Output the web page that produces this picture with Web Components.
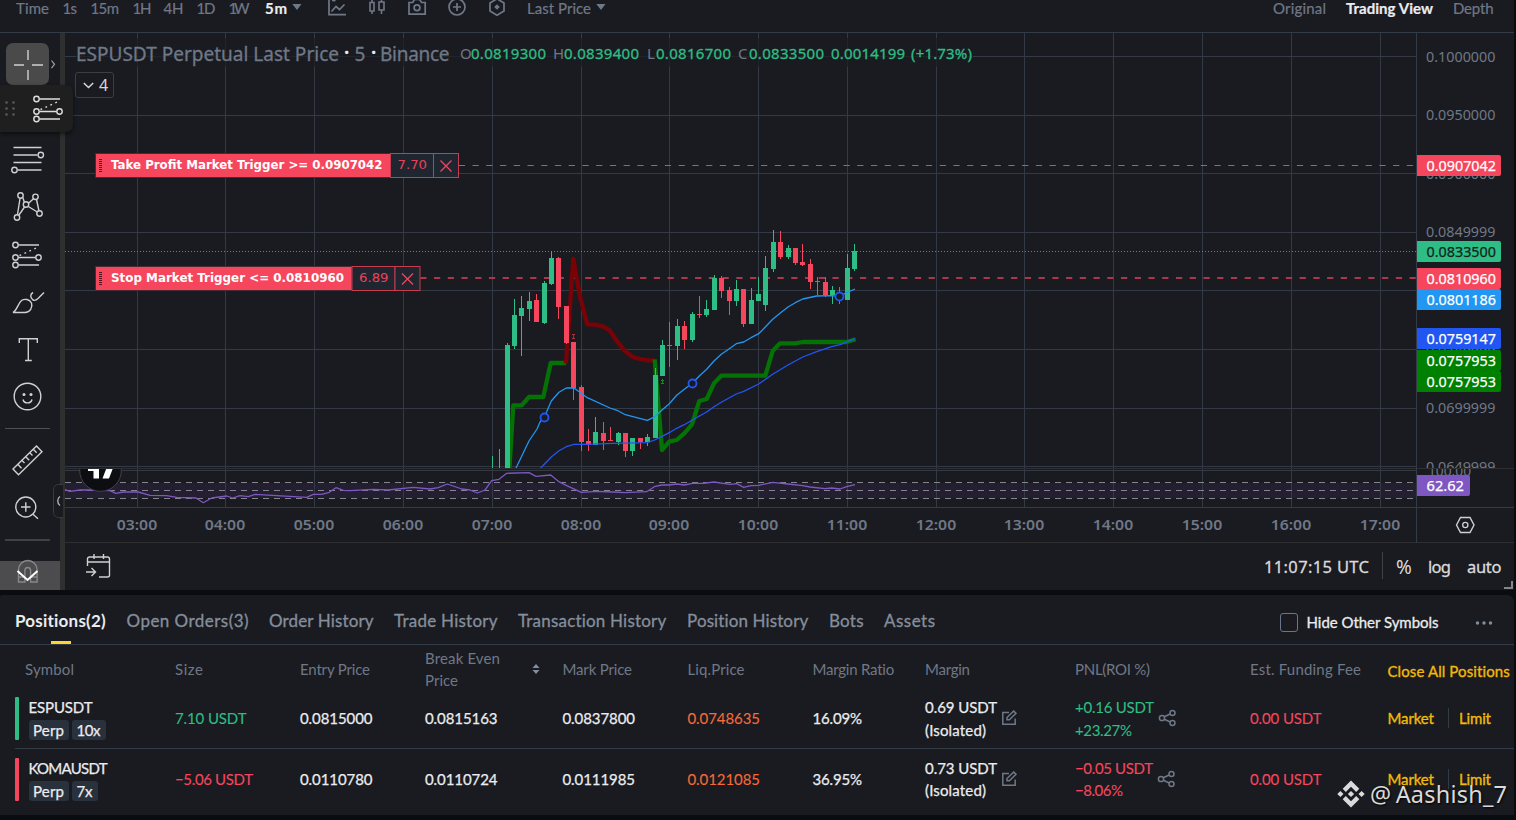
<!DOCTYPE html>
<html lang="en">
<head>
<meta charset="utf-8">
<title>ESPUSDT Perpetual</title>
<style>
html,body{margin:0;height:100%;background:#0a0d10;overflow:hidden}
body{font-family:Lato,"Open Sans",sans-serif;color:#eaecef}
</style>
</head>
<body>
<trading-screen></trading-screen>
<script>
const define = (name, css, render) => customElements.define(name, class extends HTMLElement {
  connectedCallback() {
    if (this.shadowRoot) return;
    this.attachShadow({ mode: 'open' }).innerHTML = `<style>${css}</style>${render(this)}`;
  }
});

/* Single-line text tracked to occupy a given width */
customElements.define('fit-text', class extends HTMLElement {
  connectedCallback() {
    if (this.shadowRoot) return;
    const w = +this.getAttribute('w');
    this.attachShadow({ mode: 'open' }).innerHTML =
      `<style>:host{display:inline-block;white-space:nowrap;flex:none;width:${w}px}span{display:inline-block}</style><span><slot></slot></span>`;
    const s = this.shadowRoot.querySelector('span');
    const nat = s.getBoundingClientRect().width;
    const n = this.textContent.length;
    if (nat && n > 1) s.style.letterSpacing = ((w - nat) / (n - 1)).toFixed(3) + 'px';
  }
});

/* Lays [x, width, html, class] items in a flex run, spacing them by margins */
const run = (start, items) => {
  let end = start;
  return items.map(([x, w, html, cls = '']) => {
    const m = x - end; end = x + w;
    return html[0] === '<'
      ? `<span class="g ${cls}" style="margin-left:${m}px;width:${w}px">${html}</span>`
      : `<fit-text class="${cls}" w="${w}" style="margin-left:${m}px">${html.replace(/</g, '&lt;')}</fit-text>`;
  }).join('');
};
const svg = (w, h, body, extra = '') => `<svg width="${w}" height="${h}" viewBox="0 0 ${w} ${h}" fill="none" stroke="currentColor" stroke-width="1.5" ${extra}>${body}</svg>`;

define('chart-toolbar', `
:host{display:flex;border-bottom:1px solid #333b47;color:#6f7887;font-size:15px;line-height:20px;box-sizing:border-box;height:33px;align-items:flex-start;-webkit-text-stroke:.2px}
fit-text{margin-top:-2px}
.on{color:#eaecef;font-weight:700}
.g{display:block;flex:none;height:20px;margin-top:-2px}
svg{display:block}`, () => run(0, [
  [16,33,'Time'],[62.500,14.500,'1s'],[90.500,28.500,'15m'],[132.500,19,'1H'],[163.500,20,'4H'],[196.500,19,'1D'],[228.500,21,'1W'],[265,22,'5m','on'],
  [292,10,`<svg width="10" height="20"><path d="M.3 6h9.2L5 12z" fill="#6f7887"/></svg>`],
  [327,20,`<svg width="20" height="20" fill="none" stroke="#6f7887" stroke-width="1.7"><path d="M2 0v16.700h17M4.500 13.500l4.500-5 3.500 3 5-5"/><path d="M6.800 0v3.500M5 2.500h3.600" stroke-width="1.4"/></svg>`],
  [368,18,`<svg width="18" height="20" fill="none" stroke="#6f7887" stroke-width="1.6"><path d="M2 4.500h4v8.500H2zM11 4h5v8h-5zM4 1v3.500M4 13v3M13.500 1v3M13.500 12v4"/></svg>`],
  [407,21,`<svg width="21" height="20" fill="none" stroke="#6f7887" stroke-width="1.700"><path d="M2 4.500h3.600l2-3h5l2 3h3.600v11.700H2z"/><circle cx="10" cy="9.700" r="2.900"/></svg>`],
  [447,20,`<svg width="20" height="20" fill="none" stroke="#6f7887" stroke-width="1.700"><circle cx="10" cy="9" r="8"/><path d="M6 9h8M10 5v8"/></svg>`],
  [488,18,`<svg width="18" height="20" fill="none" stroke="#6f7887" stroke-width="1.700"><path d="M9 .8l7 4.100v8.200l-7 4.100-7-4.100V4.900z"/><path d="M9 6.200l2.800 2.800L9 11.800 6.200 9z" fill="#6f7887" stroke="none"/></svg>`],
  [527,64,'Last Price'],
  [596,10,`<svg width="10" height="20"><path d="M.3 6h9.2L5 12z" fill="#6f7887"/></svg>`],
  [1273,53,'Original'],[1346,87,'Trading View','on'],[1453,40.500,'Depth']
]));

/* Drawing tools: each entry is [top, height, artwork in rail coordinates] */
const ring = (x, y, r = 2.7) => `<circle cx="${x}" cy="${y}" r="${r}"/>`;
const projection = (x, y, w) => `<path d="M${x+6} ${y}h${w-7}M${x+6} ${y+12.500}h${w-10.500}M${x+6} ${y+20}h${w-7}"/><path d="M${x+7} ${y+10.500}L${x+w-1} ${y+1.800}" stroke-dasharray="1.800 3.600"/>${ring(x+3,y)}${ring(x+3,y+12.500)}${ring(x+w-1.500,y+12.500)}${ring(x+3,y+20)}`;
const tools = [
  [33,58,`<rect x="6" y="43" width="43" height="42" rx="7" fill="#4a4a4a" stroke="none"/><path d="M14 65h10M32 65h11M28 50v10M28 70v10"/><path d="M51.500 60.500l3 3.800-3 3.800" stroke="#a0a0a0" stroke-width="1.200"/>`],
  [131,52,`<path d="M13.500 147.500h28M13.500 155h24M13.500 162.500h28M18 170h23.500"/>${ring(40.800,155)}${ring(14.500,170)}`],
  [183,48,`<path d="M17.500 214.500l2.500-16M22.800 197.500l1.500 4.500M28.500 203.300l5-4.500M36.500 199.500l2.500 11.500M19 215l5.500-8M28.300 206.500l9 5.500"/>${ring(20.500,195.500)}${ring(35.500,196.800)}${ring(26,204.500)}${ring(17,217.500)}${ring(39.500,213.500)}`],
  [231,48, projection(12.500,245,27.500)],
  [279,48,`<path d="M13 312.500c4-2 5-9 8.500-12 3-2 8-1.500 10 2.500 1.500 4.500-1.500 9.500-6.500 9.500zM33 292.500c-3 1.500-3 5 0 7.500 2 1 4-.5 5-1.500l6-6"/>`],
  [327,47,`<path d="M19.300 343v-4.200h18v4.200M28.300 339v21.500M25 360.500h6.800"/>`],
  [374,46,`<circle cx="27.500" cy="396.500" r="13.300"/><path d="M23 399.500c1 4.500 8 4.500 9 0"/><circle cx="24" cy="394.500" r="1.500" fill="#d4d4d4" stroke="none"/><circle cx="31" cy="394.500" r="1.500" fill="#d4d4d4" stroke="none"/>`],
  [420,17,`<path d="M5 428.500h45" stroke="#4f4f52" stroke-width="1"/>`],
  [437,46,`<path d="M13 469L36.500 446l5.500 5.700L18.500 474.800zM18 464.500l3.500 3.700M22 460.500l2.500 2.500M26 457l3.200 3.200M30 453l2.500 2.500M33.500 449.500l3.200 3.200"/>`],
  [483,50,`<circle cx="25.800" cy="507" r="10"/><path d="M21 507h9.500M25.800 502.200v9.500M33 514.300l5 4.500"/>`],
  [533,12,`<path d="M5 540h45" stroke="#4f4f52" stroke-width="1.700"/>`],
  [545,45,`<path d="M0 561h60v29H0z" fill="#4c4c4e" stroke="none"/><path d="M18.500 582v-12a9.300 9.500 0 0 1 18.600 0v12h-6.500v-12a2.900 3 0 0 0-5.700 0v12zM18.500 577h6.400M30.600 577h6.500" stroke="#88888c"/><path d="M17.500 571l10 9 10-9" stroke="#fff" stroke-width="2"/>`]
];
define('tool-rail', `
:host{display:flex;flex-direction:column;width:60px;border-right:5px solid #2f2f2f;flex:none;position:relative;color:#d0d0d0}
svg{display:block;flex:none}
.fly{position:absolute;left:0;top:52px;width:73px;height:47px;background:#1f1f1f;border-radius:0 7px 7px 0;box-shadow:0 2px 4px #0008;z-index:3}
.grip{position:absolute;left:53px;top:451px;z-index:3}`, () =>
  tools.map(([t, h, art], i) => `<svg width="60" height="${i ? h : 98}" viewBox="0 ${t} 60 ${i ? h : 98}" fill="none" stroke="currentColor" stroke-width="1.400">${art}</svg>`).join('') +
  `<div class="fly"><svg width="73" height="47" viewBox="0 85 73 47" fill="none" stroke="#dedede" stroke-width="1.400"><g fill="#5a5a5a" stroke="none">${[102.500,108.500,114.500].map(y => `<circle cx="6.500" cy="${y}" r="1.300"/><circle cx="13.500" cy="${y}" r="1.300"/>`).join('')}</g>${projection(33.500,99,27.500)}</svg></div>
  <svg class="grip" width="11" height="34" fill="#1a1b20" stroke="#3a3a3c"><path d="M10 .5H5.500a5 5 0 0 0-5 5v23a5 5 0 0 0 5 5H10"/><path d="M7 12.500c-3 2-3 7 0 9" stroke="#b0b0b0" stroke-width="1.400"/></svg>`);

/* x, up?, body top, body bottom, high, low */
const candles = [[490,1,468,468,456,468],[497,1,468,468,449,468],[505,1,345,468,343,468],[512,1,315,346,299,349],[519,1,308,316,296,356],[527,1,301,309,292,321],[534,0,300,322,294,322],[542,1,283,323,281,324],[549,1,258,284,251,285],[556,0,258,307,257,319],[564,0,306,343,306,344],[571,0,342,388,342,400],[579,0,387,442,385,451],[586,0,441,445,429,451],[593,1,432,445,417,445],[601,0,433,441,422,450],[608,0,440,441,427,441],[616,1,433,442,432,445],[623,0,433,451,433,457],[630,1,438,451,438,456],[638,0,438,442,438,449],[645,1,437,442,434,446],[653,1,375,438,368,438],[660,1,345,376,340,376],[667,0,345,346,322,367],[675,1,326,346,319,360],[682,0,326,340,321,349],[690,1,314,340,312,342],[697,0,314,315,296,318],[704,1,309,315,300,317],[712,1,278,310,275,310],[719,0,278,291,276,298],[727,0,290,301,287,315],[734,1,289,301,280,306],[741,0,289,324,289,327],[749,1,300,324,288,324],[756,1,294,301,277,301],[763,1,268,305,256,311],[771,1,242,269,230,272],[778,0,242,257,231,259],[786,1,248,257,245,259],[793,0,248,263,248,265],[800,0,262,265,244,266],[808,0,264,282,259,289],[815,0,281,282,277,295],[823,0,282,295,277,297],[830,1,290,295,286,304],[837,0,293,298,287,304],[845,1,268,300,254,300],[852,1,251,269,244,271]];
const pts = (ox, oy, list) => list.map(([x, y]) => `${(ox + x / 3).toFixed(1)},${(oy + y / 3).toFixed(1)}`).join(' ');
const A = l => pts(480, 220, l), B = l => pts(640, 220, l), C = l => pts(60, 250, l);
const line = (p, c, w) => `<polyline points="${p}" fill="none" stroke="${c}" stroke-width="${w}" stroke-linejoin="round"/>`;
const txt = (x, y, w, t, extra = '') => `<text x="${x}" y="${y}" textLength="${w}" lengthAdjust="spacingAndGlyphs" ${extra}>${t}</text>`;
const vx = [137,225,314,403,492,581,669,758,847,936,1024,1113,1202,1291,1380];
const tag = (y, t, fill, color = '#fff', w = 84) => `<path d="M1417 ${y}h${w-2}a2 2 0 0 1 2 2v17a2 2 0 0 1-2 2h-${w-2}z" fill="${fill}"/>${txt(1426.500, y+15.800, w===84?69.500:37.500, t, `fill="${color}" stroke="${color}" stroke-width=".25"`)}`;
const order = (x, y, h, w, t, tw, q, ty) => {
  const e = x + w;
  return `<rect x="${x-1}" y="${y-1}" width="${w+2}" height="${h+2}" fill="#4a2a33"/><rect x="${x}" y="${y}" width="${w}" height="${h}" fill="#f6465d"/>
  <path d="M${x+4.500} ${y+5}v14" stroke="#3d1a24" stroke-width="3" stroke-dasharray="1 1" shape-rendering="crispEdges"/>
  ${txt(x+15, ty, tw, t, 'class="v" font-weight="700" fill="#fff"')}
  <rect x="${e+.5}" y="${y-.5}" width="43" height="${h+1}" fill="#202630" stroke="#c63c50"/>
  <rect x="${e+43.500}" y="${y-.5}" width="25" height="${h+1}" fill="#202630" stroke="#c63c50"/>
  ${txt(e+7.500, ty, 29.500, q, 'class="v" fill="#e8435a"')}
  <path d="M${e+50.500} ${y+6.500}l11 11M${e+61.500} ${y+6.500}l-11 11" stroke="#f6465d" stroke-width="1.200"/>`;
};
define('price-chart', `
:host{display:block;height:510px}
svg{display:block}
text{font-family:"Noto Sans",sans-serif;font-size:15px}
.v{font-family:"DejaVu Sans",sans-serif;font-size:12px}`, () => `
<svg width="1449" height="510" viewBox="65 33 1449 510">
<defs><clipPath id="m"><path d="M65 33h1351v435H65z"/></clipPath><clipPath id="a"><path d="M1417 33h97v435h-97z"/></clipPath><clipPath id="r"><path d="M65 469h1449v38H65z"/></clipPath></defs>
<g shape-rendering="crispEdges">
<path d="M65 483h1351v15H65z" fill="#231f31"/>
<path d="${vx.map(x => `M${x+.5} 33v474`).join('')}${[56,115,173,232,290,349,408,466,470].map(y => `M65 ${y+.5}h1351`).join('')}" stroke="#333a46"/>
<path d="M65 468.500h1449M65 542.500h1449" stroke="#2f2f31"/>
<path d="M65 507.500h1449M1416.500 33v510" stroke="#333b47"/>
<path d="M65 482.500h1351M65 490.500h1351M65 498.500h1351" stroke="#85858e" stroke-dasharray="6 5"/>
</g>
${line(C([[15,719],[30,724],[60,720],[110,720],[150,722],[167,730],[190,726],[235,726],[270,736],[320,737],[350,742],[408,744],[430,758],[455,744],[500,738],[518,744],[540,737],[565,740],[585,733],[650,737],[740,742],[760,733],[785,733],[808,727],[828,713],[850,721],[870,722],[940,718],[985,720],[1060,712],[1110,717],[1135,713],[1162,702],[1205,717],[1230,720],[1252,729],[1275,720]])+' '+A([[35,782],[57,778],[80,760],[147,758],[168,769],[212,765],[235,784],[260,797],[304,817],[350,814],[400,816],[435,818],[500,815],[523,800],[545,795]])+' '+B([[88,795],[110,792],[133,795],[157,790],[190,790],[222,786],[270,793],[290,791],[311,802],[333,797],[356,796],[398,787],[444,792],[488,797],[510,801],[555,806],[575,804],[600,807],[620,800],[645,794]]),'#7e57c2',1.3)}
<g clip-path="url(#r)"><circle cx="100.500" cy="470.500" r="20.800" fill="#0c0e12" stroke="#434348"/><path d="M88 468h11v10.500h-5.500V471H88zM106.500 468h6.500l-4 10.500h-6.500z" fill="#fff"/></g>
<g clip-path="url(#m)">
<path d="M65 251.500h1351" stroke="#2ebd85" stroke-dasharray="1 2" shape-rendering="crispEdges" opacity=".85"/>
<path d="M472.500 165.500H1416M459 165.500h6" stroke="#e8435a" stroke-width="1.200" stroke-dasharray="6.240 7.500"/>
<path d="M434 278H1416M420.500 278h6" stroke="#ab3849" stroke-width="2" stroke-dasharray="6.240 7.500"/>
${line(A([[88,752],[100,556],[125,556],[147,531],[190,531],[212,429],[258,429]]),'#047204',4.3)}
${line(A([[258,430],[280,116],[300,230],[322,313],[345,314],[370,320],[390,332],[412,365],[434,392],[458,411],[480,417],[502,421],[524,421]]),'#780306',4.3)}
${line(B([[44,418],[66,690],[88,665],[110,660],[133,640],[156,613],[178,543],[200,537],[222,490],[244,467],[376,467],[398,393],[420,370],[466,370],[488,366],[620,366],[647,358]]),'#047204',4.3)}
<g shape-rendering="crispEdges">${candles.map(([x,u,t,b,h,l]) => `<path d="M${x} ${t}h5v${b-t}h-5zM${x+2} ${h}h1v${l-h}h-1z" fill="${u?'#2ebd85':'#f6465d'}" fill-rule="nonzero"/>`).join('')}</g>
${line(A([[108,744],[147,663],[171,627],[180,606],[193,590],[200,575],[214,543],[237,517],[259,504],[282,504],[322,533],[390,564],[411,571],[436,584],[502,601],[525,590],[545,571]])+' '+B([[88,551],[110,526],[133,508],[157,490],[178,468],[200,448],[222,423],[244,403],[268,386],[289,371],[311,366],[333,353],[356,341],[376,321],[398,298],[420,280],[444,261],[466,248],[488,237],[530,228],[575,227],[598,229],[620,218],[645,207]]),'#2196f3',1.3)}
${line(A([[182,744],[214,711],[237,692],[259,680],[282,673],[320,673],[400,670]])+' '+B([[22,668],[44,660],[66,649],[88,638],[110,625],[133,614],[157,600],[200,576],[222,560],[244,547],[289,522],[311,514],[356,492],[398,463],[444,435],[488,411],[530,395],[575,380],[600,374],[645,356]]),'#2156f3',1.3)}
<g fill="#1a1b20" stroke="#2156f3" stroke-width="1.800"><circle cx="544.500" cy="417.500" r="4"/><circle cx="692.500" cy="383.500" r="4"/><circle cx="839.500" cy="296.500" r="4"/></g>
<path d="M572 334.500h3M573.500 334v5M572 338.500h3" stroke="#a8352f"/><path d="M661 380.500h3M662.500 379v5M661 383.500h3" stroke="#0f8f1f"/>
</g>
${order(96,154,23,294,'Take Profit Market Trigger &gt;= 0.0907042',271.500,'7.70',169.300)}
${order(96,267,23,255.500,'Stop Market Trigger &lt;= 0.0810960',233,'6.89',282)}
<g fill="#6f7887" clip-path="url(#a)">${[[56,'0.1000000'],[114,'0.0950000'],[173,'0.0900000'],[231,'0.0849999'],[349,'0.0749999'],[407,'0.0699999'],[466,'0.0649999']].map(([y,t]) => txt(1426, y+5.700, 69.500, t)).join('')}</g>
<g clip-path="url(#r)" fill="#6f7887">${txt(1428, 475.500, 43, '100.00')}</g>
${tag(155,'0.0907042','#f6465d')}${tag(241,'0.0833500','#2ebd85','#12241c')}${tag(268,'0.0810960','#f6465d')}${tag(289,'0.0801186','#2196f3')}${tag(328,'0.0759147','#2156f3')}${tag(350,'0.0757953','#008000')}${tag(371,'0.0757953','#008000')}${tag(475,'62.62','#7e57c2','#fff',53)}
<g fill="#6f7887" font-weight="600">${vx.map((x,i) => txt(x-20.300, 530, 40.500, String(i+3).padStart(2,'0')+':00')).join('')}</g>
<path d="M1456.500 525l4-7.500h9.500l4 7.500-4 7.500h-9.500z" fill="none" stroke="#d0d0d0" stroke-width="1.400"/><circle cx="1465.300" cy="525" r="2.600" fill="none" stroke="#d0d0d0" stroke-width="1.300"/>
</svg>`);

define('chart-legend', `
:host{position:absolute;top:5px;left:11px;display:block;font-family:"Noto Sans",sans-serif}
.row{display:flex;align-items:baseline;width:897px;height:29px;line-height:29px;background:#1a1b20b0;color:#6f7887;font-size:15px}
.t{font-size:19px;position:relative;top:2px;-webkit-text-stroke:.3px}.w{color:#eaecef;font-size:19px;font-weight:700}.g{color:#2ebd85;-webkit-text-stroke:.3px}
.n{display:flex;align-items:center;width:37px;height:24px;margin:5px 0 0 -1px;border:1px solid #3e3e41;border-radius:3px;background:#1a1b20;color:#d8d8d8;font-size:16px}
.n svg{margin:0 5px 0 7px}`, () => `<div class="row">${run(76, [
  [76,263,'ESPUSDT Perpetual Last Price','t'],[344,5,'·','w'],[354.500,10,'5','t'],[371,5,'·','w'],[380,69.500,'Binance','t'],
  [460,10,'O'],[471,75,'0.0819300','g'],[553,11,'H'],[564,75,'0.0839400','g'],[647,8,'L'],[656,75,'0.0816700','g'],[738,10,'C'],[749,75,'0.0833500','g'],[831,74,'0.0014199','g'],[911,61,'(+1.73%)','g']
])}</div><div class="n">${svg(11,7,'<path d="M.8 1l4.700 4.500L10.200 1"/>')}4</div>`);

define('chart-footer', `
:host{display:flex;height:47px;align-items:center;font-family:"Noto Sans",sans-serif;font-size:16.500px;color:#dadada;position:relative}
fit-text{line-height:24px;-webkit-text-stroke:.3px}
.p{font-size:19px;-webkit-text-stroke:0}
.g{display:block;flex:none}.g svg{display:block;position:relative;top:-1px}
.c{position:absolute;right:1px;bottom:1px;width:7px;height:6px;border:solid #85858b;border-width:0 2px 2px 0}`, () => run(65, [
  [85,26,`<svg width="26" height="26" fill="none" stroke="#d0d0d0" stroke-width="1.400"><path d="M2.500 13V6a2 2 0 0 1 2-2h18a2 2 0 0 1 2 2v16a2 2 0 0 1-2 2H14M2.500 9h22M9 1v5M18.500 1v5M1 19h9M6.500 15l4 4-4 4"/></svg>`],
  [1264,105,'11:07:15 UTC'],[1382,1,`<svg width="1" height="27"><path d="M0 0h1v27H0z" fill="#414145"/></svg>`],[1396,17,'%','p'],[1428,23,'log'],[1467,34.500,'auto']
]) + '<i class="c"></i>');

define('chart-panel', `
:host{display:flex;flex-direction:column;width:1514px;height:590px;background:#1a1b20}
.work{display:flex;height:557px}
.main{display:flex;flex-direction:column;position:relative;width:1449px}`, () =>
  `<chart-toolbar></chart-toolbar><div class="work"><tool-rail></tool-rail><div class="main"><price-chart></price-chart><chart-legend></chart-legend><chart-footer></chart-footer></div></div>`);

define('position-tabs', `
:host{display:flex;height:49px;border-bottom:1px solid #333b47;color:#848e9c;font-size:17px;line-height:20px;font-weight:400;position:relative}
fit-text{margin-top:16px;-webkit-text-stroke:.3px}
.on{color:#eaecef;font-weight:700;-webkit-text-stroke:0}
.hide{color:#eaecef;font-size:15px;margin-top:17px}
.g{display:block;flex:none}.g svg{display:block}
.bar{position:absolute;left:51px;bottom:0;width:20px;height:3px;background:#fcd535}`, () => run(0, [
  [15,91,'Positions(2)','on'],[126.500,122,'Open Orders(3)'],[269,104.500,'Order History'],[394,103.500,'Trade History'],[518,148.500,'Transaction History'],[687,121.500,'Position History'],[829,34.500,'Bots'],[884,51,'Assets'],
  [1280,18,`<svg width="18" height="40" fill="none" stroke="#6b7686"><rect x=".5" y="18.500" width="17" height="18" rx="2.500"/></svg>`],
  [1306.500,132,'Hide Other Symbols','hide'],
  [1475,18,`<svg width="18" height="40" fill="#848e9c"><circle cx="2.500" cy="28" r="1.700"/><circle cx="9" cy="28" r="1.700"/><circle cx="15.500" cy="28" r="1.700"/></svg>`]
]) + '<i class="bar"></i>');

const grid = `display:grid;grid-template-columns:160px 125px 125px 137.500px 125px 125px 112.500px 150px 175px 137.500px 1fr;align-items:center`;
define('positions-header', `
:host{${grid};height:38px;padding-top:5px;margin-left:15px;color:#6f7887;font-size:15px;line-height:22px}
div{display:flex;align-items:center;margin-block:-6px}
.y{color:#f0b90b;padding-top:4px;-webkit-text-stroke:.35px}
.be{justify-content:space-between;padding-right:22.500px}`, () => [
  ['Symbol',49],['Size',28],['Entry Price',70]].map(([t,w],i) => `<div><fit-text w="${w}"${i?'':' style="margin-left:10px"'}>${t}</fit-text></div>`).join('') +
  `<div class="be"><span><fit-text w="75">Break Even</fit-text><br><fit-text w="33">Price</fit-text></span><svg width="8" height="12" fill="#848e9c"><path d="M4 1l3.500 4h-7zM4 11l3.500-4h-7z"/></svg></div>` +
  [['Mark Price',69.500],['Liq.Price',57],['Margin Ratio',82],['Margin',45],['PNL(ROI %)',75],['Est. Funding Fee',111]].map(([t,w]) => `<div><fit-text w="${w}">${t}</fit-text></div>`).join('') +
  `<div class="y"><fit-text w="122.500">Close All Positions</fit-text></div>`);

define('position-row', `
:host{${grid};height:60px;margin-left:15px;font-size:15px;line-height:22px;color:#eaecef;--c:#2ebd85;-webkit-text-stroke:.25px}
:host([down]){--c:#f6465d}
:host([line]){border-bottom:1px solid #333b47}
.sym{display:flex;gap:9.500px}.sym i{width:4px;height:43px;border-radius:1px;background:var(--c);margin-top:1px}
.tags{display:flex;gap:3px;margin-top:2px}
.tags span{display:flex;justify-content:center;height:20px;line-height:21px;background:#29313d;border-radius:3px}
.c{color:var(--c);-webkit-text-stroke:.1px}.o{color:#f56a38;-webkit-text-stroke:.1px}.r{color:#f6465d;-webkit-text-stroke:.1px}
.two{display:flex;align-items:center}
.two span{display:flex;flex-direction:column}
.two span fit-text+fit-text{margin-top:1px}
:host([down]) .two span fit-text+fit-text{margin-top:0}
.two svg{color:#6f7887;margin-left:4px;-webkit-text-stroke:0}
.act{display:flex;align-items:center;color:#f0b90b;-webkit-text-stroke:.35px}
.act i{width:1px;height:20px;background:#333b47;margin:0 10px 0 14px}`, el => {
  const d = JSON.parse(el.getAttribute('data'));
  const f = (t, w, c = '') => `<div class="${c}"><fit-text w="${w}">${t}</fit-text></div>`;
  return `<div class="sym"><i></i><div><fit-text w="${d.nw}">${d.name}</fit-text><div class="tags"><span style="width:40px"><fit-text w="31">Perp</fit-text></span><span style="width:${d.lw+10}px"><fit-text w="${d.lw}">${d.lev}</fit-text></span></div></div></div>
  ${f(d.size, d.sw, 'c')}${f(d.entry,72.500)}${f(d.be,72.500)}${f(d.mark,72.500)}${f(d.liq,72.500,'o')}${f(d.ratio,49.500)}
  <div class="two"><span><fit-text w="72">${d.margin}</fit-text><fit-text w="61">(Isolated)</fit-text></span>${svg(17,16,'<path d="M8 2.500H1.800v11.700h12.400V8.500M6 9.800V7.500L12.700 1l2.300 2.200L8.400 9.800z"/>')}</div>
  <div class="two c"><span><fit-text w="${d.pw}">${d.pnl}</fit-text><fit-text w="${d.rw}">${d.roi}</fit-text></span>${svg(19,18,'<circle cx="4" cy="9" r="2.600"/><circle cx="14.500" cy="4" r="2.500"/><circle cx="14.500" cy="14" r="2.500"/><path d="M6.300 7.800L12.200 5M6.300 10.200l5.900 2.800"/>')}</div>
  ${f('0.00 USDT',71.500,'r')}
  <div class="act"><fit-text w="46.500">Market</fit-text><i></i><fit-text w="32">Limit</fit-text></div>`;
});

define('positions-panel', `
:host{display:block;width:1514px;height:220px;margin-top:5px;background:#1a1b20;border-radius:2px 7px 0 0;overflow:hidden}`, () => `
<position-tabs></position-tabs><positions-header></positions-header>
<position-row line data='{"name":"ESPUSDT","nw":64,"lev":"10x","lw":24,"size":"7.10 USDT","sw":71.5,"entry":"0.0815000","be":"0.0815163","mark":"0.0837800","liq":"0.0748635","ratio":"16.09%","margin":"0.69 USDT","pnl":"+0.16 USDT","pw":79,"roi":"+23.27%","rw":57}'></position-row>
<position-row down data='{"name":"KOMAUSDT","nw":79,"lev":"7x","lw":16,"size":"−5.06 USDT","sw":78,"entry":"0.0110780","be":"0.0110724","mark":"0.0111985","liq":"0.0121085","ratio":"36.95%","margin":"0.73 USDT","pnl":"−0.05 USDT","pw":78,"roi":"−8.06%","rw":48}'></position-row>`);

define('author-mark', `
:host{position:absolute;right:9px;bottom:11px;display:flex;align-items:center;gap:5px;font:23.500px/30px "Noto Sans",sans-serif;color:#d9dadb;text-shadow:1px 1px 2px #000}
fit-text{word-spacing:-2px}`, () =>
`<svg width="28" height="28" viewBox="0 0 28 28" fill="#d9dadb"><path d="M14 .5l8.300 8.300-3.100 3.100L14 6.700l-5.200 5.200-3.100-3.100zM14 27.500l8.300-8.300-3.100-3.100L14 21.300l-5.200-5.200-3.100 3.100zM3.400 10.900L6.500 14l-3.100 3.100L.3 14zM24.600 10.900l3.100 3.100-3.100 3.100-3.100-3.100zM14 10.900l3.100 3.100-3.100 3.100-3.100-3.100z"/></svg><fit-text w="137">@ Aashish_7</fit-text>`);

define('trading-screen', `:host{display:flex;flex-direction:column;position:relative;width:1516px;height:820px;overflow:hidden}`,
  () => `<chart-panel></chart-panel><positions-panel></positions-panel><author-mark></author-mark>`);
</script>
</body>
</html>
